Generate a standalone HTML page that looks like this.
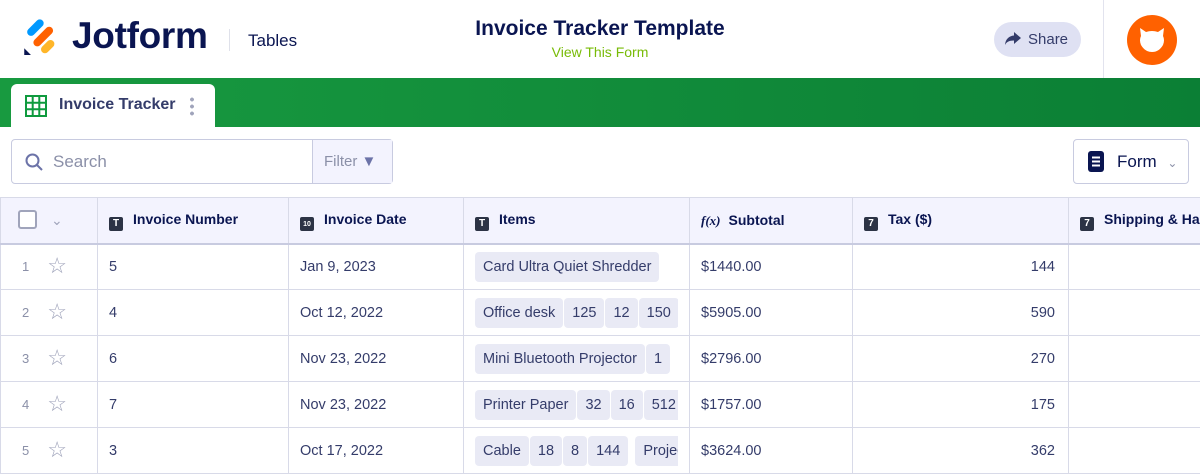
<!DOCTYPE html><html><head><style>
*{box-sizing:border-box;margin:0;padding:0}
body{width:1200px;height:474px;overflow:hidden;background:#fff;font-family:"Liberation Sans",sans-serif;color:#0a1551;position:relative}
.a{position:absolute}
table{position:absolute;left:0;top:197px;border-collapse:collapse;table-layout:fixed;width:1290px}
td,th{border:1px solid #d8dae8;height:46px;font-size:14.5px;color:#343c6a;white-space:nowrap;overflow:hidden;padding:0 0 0 11px;text-align:left;font-weight:normal;vertical-align:middle;line-height:20px}
th{background:#f3f3fe;font-weight:bold;color:#0a1551;height:46px;border-bottom:2px solid #c8cbe0;font-size:14px}
.ic{display:inline-block;width:14px;height:14px;background:#2c3345;border-radius:2px;color:#fff;font-size:10px;text-align:center;line-height:14px;vertical-align:-2px;margin-right:10px}
.cw{width:203px;overflow:hidden;white-space:nowrap}
.chip{display:inline-block;background:#e9eaf5;border-radius:4px;padding:0 8px;height:30px;line-height:30px;margin-right:1px}
.num{color:#8b90a8;font-size:13px}
.star{color:#a0a4bb;font-size:22px;margin-left:18px;vertical-align:-2px}
</style></head><body>
<svg class="a" style="left:22px;top:17px" width="38" height="38" viewBox="0 0 34 34"><rect x="3" y="6" width="18" height="7" rx="3.5" transform="rotate(-45 12 9.5)" fill="#0099ff"/><rect x="8" y="14" width="22" height="7" rx="3.5" transform="rotate(-45 19 17.5)" fill="#ff6100"/><rect x="16" y="23" width="14" height="7" rx="3.5" transform="rotate(-45 23 26.5)" fill="#ffb629"/><path d="M2 28 L8 34 L2 34Z" fill="#0a1551"/></svg>
<div class="a" style="left:72px;top:15px;font-size:37px;font-weight:bold;color:#0a1551;letter-spacing:-0.3px">Jotform</div>
<div class="a" style="left:229px;top:29px;width:1px;height:22px;background:#dfe1ea"></div>
<div class="a" style="left:248px;top:31px;font-size:17px;color:#0a1551">Tables</div>
<div class="a" style="left:0;top:17px;width:1200px;text-align:center;font-size:21px;font-weight:bold;color:#0a1551">Invoice Tracker Template</div>
<div class="a" style="left:0;top:44px;width:1200px;text-align:center;font-size:14px;color:#78bb07">View This Form</div>
<div class="a" style="left:994px;top:22px;width:87px;height:35px;border-radius:18px;background:#dfe1f3;font-size:15px;color:#343c6a;line-height:35px;padding-left:34px">Share</div>
<svg class="a" style="left:1004px;top:31px" width="18" height="16" viewBox="0 0 18 16"><path d="M10 1 L17 7 L10 13 V9.5 C5 9.5 2.5 11 1 14 C1.5 8 5 5 10 4.5Z" fill="#343c6a"/></svg>
<div class="a" style="left:1103px;top:0;width:1px;height:78px;background:#e2e3ee"></div>
<div class="a" style="left:1127px;top:15px;width:50px;height:50px;border-radius:50%;background:#ff6100"></div>
<svg class="a" style="left:1137px;top:25px" width="30" height="30" viewBox="0 0 30 30"><path d="M3 3 L9 7 Q15 5 21 7 L27 3 L26 11 Q28 15 26 20 Q22 27 15 27 Q8 27 4 20 Q2 15 4 11Z" fill="#fff"/></svg>
<div class="a" style="left:0;top:78px;width:1200px;height:49px;background:linear-gradient(90deg,#189a40,#0b7f35)"></div>
<div class="a" style="left:11px;top:84px;width:204px;height:43px;background:#fff;border-radius:6px 6px 0 0"></div>
<svg class="a" style="left:25px;top:95px" width="22" height="22" viewBox="0 0 22 22"><rect x="1" y="1" width="20" height="20" fill="none" stroke="#0f9a3e" stroke-width="2"/><path d="M1 7.7H21M1 14.3H21M7.7 1V21M14.3 1V21" stroke="#0f9a3e" stroke-width="2"/></svg>
<div class="a" style="left:59px;top:96px;font-size:16px;font-weight:bold;color:#343c6a">Invoice Tracker</div>
<div class="a" style="left:190px;top:96px;width:4px;height:20px;background:radial-gradient(circle,#a0a4bb 1.8px,transparent 2px) 0 0/4px 7px"></div>
<div class="a" style="left:11px;top:139px;width:382px;height:45px;border:1px solid #c8cbe0;border-radius:4px"></div>
<div class="a" style="left:312px;top:140px;width:80px;height:43px;background:#f3f3fe;border-left:1px solid #c8cbe0;font-size:15px;color:#8b90a8;line-height:43px;padding-left:11px">Filter <span style="color:#6c73a8">▼</span></div>
<svg class="a" style="left:25px;top:153px" width="18" height="18" viewBox="0 0 18 18"><circle cx="7.5" cy="7.5" r="6" fill="none" stroke="#6c73a8" stroke-width="2"/><path d="M12 12L17 17" stroke="#6c73a8" stroke-width="2"/></svg>
<div class="a" style="left:53px;top:152px;font-size:17px;color:#8b90a8">Search</div>
<div class="a" style="left:1073px;top:139px;width:116px;height:45px;border:1px solid #c8cbe0;border-radius:4px;font-size:17px;color:#0a1551;line-height:43px;padding-left:43px">Form <span style="color:#8b90a8;font-size:12px;margin-left:6px">⌄</span></div>
<svg class="a" style="left:1088px;top:151px" width="16" height="21" viewBox="0 0 16 21"><rect width="16" height="21" rx="3" fill="#0a1551"/><path d="M4 6.5H12M4 10.5H12M4 14.5H12" stroke="#fff" stroke-width="2"/></svg>
<table>
<colgroup><col style="width:97px"><col style="width:191px"><col style="width:175px"><col style="width:226px"><col style="width:163px"><col style="width:216px"><col style="width:222px"></colgroup>
<tr><th style="padding-left:17px"><span style="display:inline-block;width:19px;height:19px;border:2px solid #a0a4bb;border-radius:3px;background:#fff;vertical-align:-4px"></span><span style="color:#a0a4bb;margin-left:14px;font-weight:normal">⌄</span></th>
<th><span class="ic">T</span>Invoice Number</th><th><span class="ic" style="font-size:7px;line-height:16px">10</span>Invoice Date</th><th><span class="ic">T</span>Items</th><th><i style="font-family:'Liberation Serif';font-size:13px;margin-right:8px">f(x)</i>Subtotal</th><th><span class="ic">7</span>Tax ($)</th><th><span class="ic">7</span>Shipping &amp; Handling</th></tr>
<tr><td style="padding-left:21px"><span class="num">1</span><span class="star">☆</span></td><td>5</td><td>Jan 9, 2023</td><td><div class="cw"><span class="chip">Card Ultra Quiet Shredder</span></div></td><td>$1440.00</td><td style="text-align:right;padding-right:13px">144</td><td></td></tr>
<tr><td style="padding-left:21px"><span class="num">2</span><span class="star">☆</span></td><td>4</td><td>Oct 12, 2022</td><td><div class="cw"><span class="chip">Office desk</span><span class="chip">125</span><span class="chip">12</span><span class="chip">150</span></div></td><td>$5905.00</td><td style="text-align:right;padding-right:13px">590</td><td></td></tr>
<tr><td style="padding-left:21px"><span class="num">3</span><span class="star">☆</span></td><td>6</td><td>Nov 23, 2022</td><td><div class="cw"><span class="chip">Mini Bluetooth Projector</span><span class="chip">1</span></div></td><td>$2796.00</td><td style="text-align:right;padding-right:13px">270</td><td></td></tr>
<tr><td style="padding-left:21px"><span class="num">4</span><span class="star">☆</span></td><td>7</td><td>Nov 23, 2022</td><td><div class="cw"><span class="chip">Printer Paper</span><span class="chip">32</span><span class="chip">16</span><span class="chip">512</span></div></td><td>$1757.00</td><td style="text-align:right;padding-right:13px">175</td><td></td></tr>
<tr><td style="padding-left:21px"><span class="num">5</span><span class="star">☆</span></td><td>3</td><td>Oct 17, 2022</td><td><div class="cw"><span class="chip">Cable</span><span class="chip">18</span><span class="chip">8</span><span class="chip">144</span><span class="chip" style="margin-left:6px">Projector</span></div></td><td>$3624.00</td><td style="text-align:right;padding-right:13px">362</td><td></td></tr>
</table>
</body></html>
